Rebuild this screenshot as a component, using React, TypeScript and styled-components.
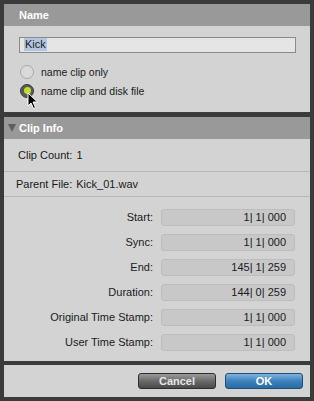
import React from 'react';
import styled, { createGlobalStyle } from 'styled-components';

const GlobalStyle = createGlobalStyle`
  html, body {
    margin: 0;
    padding: 0;
    background: #3b3b3b;
  }
  body {
    font-family: 'Liberation Sans', Arial, sans-serif;
    font-size: 10.5px;
    color: #1a1a1a;
  }
`;

const Window = styled.div`
  width: 314px;
  height: 401px;
  box-sizing: border-box;
  padding: 4px;
  background: #3b3b3b;
  display: flex;
  flex-direction: column;
`;

const SectionHeader = styled.div`
  height: 22px;
  background: #999999;
  color: #ffffff;
  font-weight: bold;
  font-size: 11px;
  display: flex;
  align-items: center;
  padding-left: 15px;
  gap: 2px;
`;

const Triangle = styled.span`
  width: 0;
  height: 0;
  border-left: 4.5px solid transparent;
  border-right: 4.5px solid transparent;
  border-top: 8px solid #5e5e5e;
  margin-left: -11px;
  margin-right: 1px;
`;

const NameBody = styled.div`
  height: 86px;
  background: #d3d3d3;
  box-sizing: border-box;
  padding: 11px 14px 0 15px;
  position: relative;
`;

const TextField = styled.div`
  height: 16px;
  box-sizing: border-box;
  border: 1px solid #8a8a8a;
  background: #e5e5e5;
  display: flex;
  align-items: center;
  padding-left: 4px;
  font-size: 11px;
`;

const Selected = styled.span`
  background: #b3c6e0;
  padding: 0 1px;
  line-height: 13px;
`;

const RadioList = styled.div`
  display: flex;
  flex-direction: column;
  gap: 5px;
  margin-top: 12px;
  margin-left: 1px;
`;

const RadioRow = styled.div`
  display: flex;
  align-items: center;
  gap: 7px;
  height: 14px;
`;

const RadioDot = styled.span<{ $on?: boolean }>`
  width: 14px;
  height: 14px;
  box-sizing: border-box;
  border-radius: 50%;
  border: 1px solid ${(p) => (p.$on ? '#3c3c3c' : '#a8a8a8')};
  background: ${(p) => (p.$on ? '#5a5a5a' : '#dadada')};
  display: flex;
  align-items: center;
  justify-content: center;

  &::after {
    content: '';
    display: ${(p) => (p.$on ? 'block' : 'none')};
    width: 7px;
    height: 7px;
    border-radius: 50%;
    background: #bfe02a;
  }
`;

const Cursor = styled.svg`
  position: absolute;
  left: 23px;
  top: 66px;
`;

const Gap = styled.div<{ $h: number }>`
  height: ${(p) => p.$h}px;
  flex: none;
`;

const InfoBody = styled.div`
  height: 223px;
  background: #d3d3d3;
  display: flex;
  flex-direction: column;
`;

const InfoLine = styled.div<{ $h: number; $pl: number }>`
  height: ${(p) => p.$h}px;
  display: flex;
  align-items: center;
  padding-left: ${(p) => p.$pl}px;
  border-bottom: 1px solid #b8b8b8;
  font-size: 11px;
  gap: 4px;
`;

const Grid = styled.div`
  display: grid;
  grid-template-columns: 149px 134px;
  column-gap: 8px;
  row-gap: 8px;
  padding-top: 12px;
`;

const Label = styled.div`
  text-align: right;
  height: 17px;
  line-height: 17px;
  font-size: 11px;
`;

const Field = styled.div`
  height: 17px;
  box-sizing: border-box;
  border: 1px solid #bdbdbd;
  border-radius: 3px;
  background: #c8c8c8;
  text-align: right;
  padding-right: 8px;
  line-height: 15px;
  font-size: 11px;
  white-space: pre;
`;

const Footer = styled.div`
  height: 31px;
  background: #d3d3d3;
  display: flex;
  justify-content: flex-end;
  align-items: center;
  gap: 9px;
  padding-right: 7px;
  padding-bottom: 1px;
`;

const Button = styled.div<{ $primary?: boolean }>`
  width: 78px;
  height: 16px;
  box-sizing: border-box;
  border-radius: 3px;
  border: 1px solid ${(p) => (p.$primary ? '#1f4f7c' : '#2e2e2e')};
  background: ${(p) =>
    p.$primary
      ? 'linear-gradient(#7fb3dc, #3d82bd 50%, #2a6aa3)'
      : 'linear-gradient(#9a9a9a, #6a6a6a 50%, #4a4a4a)'};
  color: ${(p) => (p.$primary ? '#ffffff' : '#e6e6e6')};
  font-weight: bold;
  font-size: 11px;
  display: flex;
  align-items: center;
  justify-content: center;
`;

const rows = [
  ['Start:', '1| 1| 000'],
  ['Sync:', '1| 1| 000'],
  ['End:', '145| 1| 259'],
  ['Duration:', '144| 0| 259'],
  ['Original Time Stamp:', '1| 1| 000'],
  ['User Time Stamp:', '1| 1| 000'],
];

const App: React.FC = () => {
  return (
    <>
      <GlobalStyle />
      <Window>
        <SectionHeader>Name</SectionHeader>
        <NameBody>
          <TextField>
            <Selected>Kick</Selected>
          </TextField>
          <RadioList>
            <RadioRow>
              <RadioDot />
              name clip only
            </RadioRow>
            <RadioRow>
              <RadioDot $on />
              name clip and disk file
            </RadioRow>
          </RadioList>
          <Cursor width="12" height="18" viewBox="0 0 12 18">
            <path
              d="M1 1 L1 14 L4 11 L6.5 16.5 L8.5 15.5 L6 10 L10.5 10 Z"
              fill="#000"
              stroke="#fff"
              strokeWidth="1"
              strokeLinejoin="round"
            />
          </Cursor>
        </NameBody>
        <Gap $h={5} />
        <SectionHeader>
          <Triangle />
          Clip Info
        </SectionHeader>
        <InfoBody>
          <InfoLine $h={32} $pl={14}>
            <span>Clip Count:</span>
            <span>1</span>
          </InfoLine>
          <InfoLine $h={24} $pl={12}>
            <span>Parent File:</span>
            <span>Kick_01.wav</span>
          </InfoLine>
          <Grid>
            {rows.map(([label, value]) => (
              <React.Fragment key={label}>
                <Label>{label}</Label>
                <Field>{value}</Field>
              </React.Fragment>
            ))}
          </Grid>
        </InfoBody>
        <Gap $h={4} />
        <Footer>
          <Button>Cancel</Button>
          <Button $primary>OK</Button>
        </Footer>
      </Window>
    </>
  );
};

export default App;
